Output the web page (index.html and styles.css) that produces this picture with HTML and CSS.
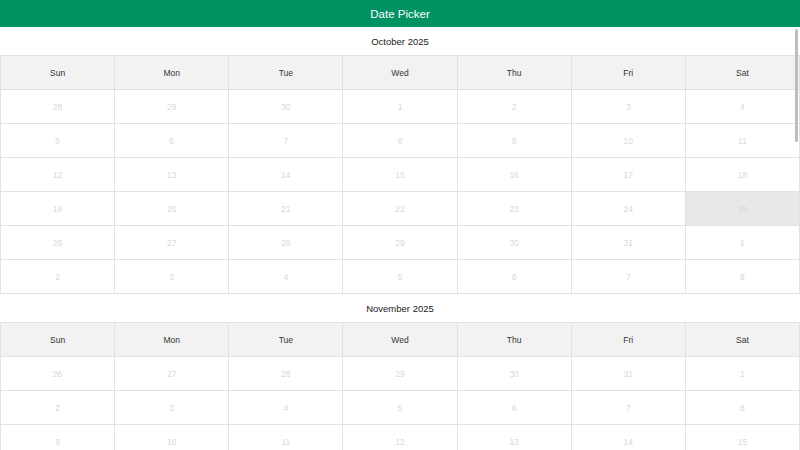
FILE: index.html
```html
<!DOCTYPE html>
<html>
<head>
<meta charset="utf-8">
<link rel="stylesheet" href="styles.css">
</head>
<body>
<div class="app">
  <header class="topbar">Date Picker</header>
  <div class="scroller">
    <section class="month">
      <div class="month-title">October 2025</div>
      <div class="grid">
        <div class="dow">Sun</div><div class="dow">Mon</div><div class="dow">Tue</div><div class="dow">Wed</div><div class="dow">Thu</div><div class="dow">Fri</div><div class="dow">Sat</div>
        <div class="day">28</div><div class="day">29</div><div class="day">30</div><div class="day">1</div><div class="day">2</div><div class="day">3</div><div class="day">4</div>
        <div class="day">5</div><div class="day">6</div><div class="day">7</div><div class="day">8</div><div class="day">9</div><div class="day">10</div><div class="day">11</div>
        <div class="day">12</div><div class="day">13</div><div class="day">14</div><div class="day">15</div><div class="day">16</div><div class="day">17</div><div class="day">18</div>
        <div class="day">19</div><div class="day">20</div><div class="day">21</div><div class="day">22</div><div class="day">23</div><div class="day">24</div><div class="day today">25</div>
        <div class="day">26</div><div class="day">27</div><div class="day">28</div><div class="day">29</div><div class="day">30</div><div class="day">31</div><div class="day">1</div>
        <div class="day">2</div><div class="day">3</div><div class="day">4</div><div class="day">5</div><div class="day">6</div><div class="day">7</div><div class="day">8</div>
      </div>
    </section>
    <section class="month">
      <div class="month-title">November 2025</div>
      <div class="grid">
        <div class="dow">Sun</div><div class="dow">Mon</div><div class="dow">Tue</div><div class="dow">Wed</div><div class="dow">Thu</div><div class="dow">Fri</div><div class="dow">Sat</div>
        <div class="day">26</div><div class="day">27</div><div class="day">28</div><div class="day">29</div><div class="day">30</div><div class="day">31</div><div class="day">1</div>
        <div class="day">2</div><div class="day">3</div><div class="day">4</div><div class="day">5</div><div class="day">6</div><div class="day">7</div><div class="day">8</div>
        <div class="day">9</div><div class="day">10</div><div class="day">11</div><div class="day">12</div><div class="day">13</div><div class="day">14</div><div class="day">15</div>
        <div class="day">16</div><div class="day">17</div><div class="day">18</div><div class="day">19</div><div class="day">20</div><div class="day">21</div><div class="day">22</div>
      </div>
    </section>
    <div class="thumb"></div>
  </div>
</div>
</body>
</html>
```
FILE: styles.css
```css
* { box-sizing: border-box; }
html, body { margin: 0; padding: 0; }
body {
  font-family: "Liberation Sans", Arial, sans-serif;
  background: #fff;
  width: 800px;
  height: 450px;
  overflow: hidden;
}
.app {
  display: flex;
  flex-direction: column;
  height: 450px;
}
.topbar {
  background: #009262;
  color: #fff;
  height: 27px;
  font-size: 11.5px;
  display: flex;
  align-items: center;
  justify-content: center;
  flex-shrink: 0;
}
.scroller {
  position: relative;
  flex: 1;
  overflow: hidden;
}
.month-title {
  height: 28px;
  display: flex;
  align-items: center;
  justify-content: center;
  font-size: 9.5px;
  color: #222;
}
.grid {
  display: grid;
  grid-template-columns: repeat(7, 1fr);
  grid-auto-rows: 34px;
  border-top: 1px solid #e2e2e2;
  border-left: 1px solid #e2e2e2;
}
.grid > div {
  border-right: 1px solid #e2e2e2;
  border-bottom: 1px solid #e2e2e2;
  display: flex;
  align-items: center;
  justify-content: center;
  font-size: 8.5px;
}
.dow {
  background: #f2f2f2;
  color: #333;
}
.day {
  color: #d8d8d8;
}
.day.today {
  background: #e8e8e8;
}
.thumb {
  position: absolute;
  top: 2px;
  right: 2px;
  width: 3px;
  height: 113px;
  background: #bdbdbd;
  border-radius: 2px;
}
```
